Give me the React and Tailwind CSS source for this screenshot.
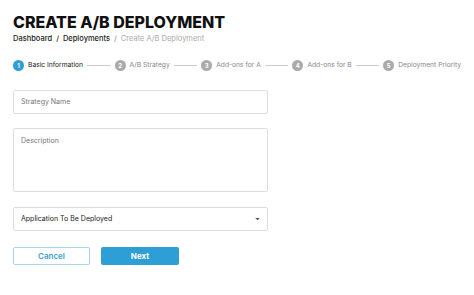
import React from 'react';

const steps = ['Basic Information', 'A/B Strategy', 'Add-ons for A', 'Add-ons for B', 'Deployment Priority'];

const App = () => {
    return (
        <div className="w-[474px] h-[295px] bg-white px-[13px] pt-[12px]" style={{ fontFamily: 'Inter, "Liberation Sans", sans-serif' }}>
            <h1 className="text-[16px] leading-[20px] font-extrabold text-[#111] whitespace-nowrap">CREATE A/B DEPLOYMENT</h1>
            <div className="mt-[1px] text-[7.5px] leading-[12px] font-medium text-[#222] whitespace-nowrap">
                Dashboard <span className="mx-[2px]">/</span> Deployments <span className="mx-[2px] text-[#999]">/</span> <span className="text-[#aaa] font-normal">Create A/B Deployment</span>
            </div>

            <div className="mt-[14px] flex items-center h-[12px]">
                {steps.map((s, i) => (
                    <React.Fragment key={s}>
                        {i > 0 && <div className="w-[32px] h-px bg-[#ccc] mx-[4px]" />}
                        <div className="flex items-center whitespace-nowrap">
                            <div className={`w-[11px] h-[11px] rounded-full flex items-center justify-center text-[6px] font-bold text-white ${i === 0 ? 'bg-[#2a9fd8]' : 'bg-[#aaa]'}`}>
                                {i + 1}
                            </div>
                            <span className={`ml-[4px] text-[6.7px] ${i === 0 ? 'text-[#222]' : 'text-[#888]'}`}>{s}</span>
                        </div>
                    </React.Fragment>
                ))}
            </div>

            <div className="mt-[19px] w-[255px] flex flex-col">
                <div className="h-[24px] border border-[#ddd] rounded-[2px] flex items-center px-[7px] text-[7px] text-[#777]">
                    Strategy Name
                </div>
                <div className="mt-[14px] h-[64px] border border-[#ddd] rounded-[2px] px-[7px] pt-[7px] text-[7px] text-[#777]">
                    Description
                </div>
                <div className="mt-[15px] h-[24px] border border-[#ddd] rounded-[2px] flex items-center justify-between px-[7px] text-[7px] text-[#222]">
                    <span>Application To Be Deployed</span>
                    <svg width="5" height="3" viewBox="0 0 6 4"><path d="M0 0 L6 0 L3 3 Z" fill="#555" /></svg>
                </div>
            </div>

            <div className="mt-[16px] flex gap-[11px]">
                <button className="w-[77px] h-[18px] border border-[#a9d5ec] rounded-[2px] text-[8px] font-semibold text-[#3a9fd0]">Cancel</button>
                <button className="w-[78px] h-[18px] bg-[#2e9fd6] rounded-[2px] text-[8px] font-bold text-white">Next</button>
            </div>
        </div>
    );
};

export default App;
